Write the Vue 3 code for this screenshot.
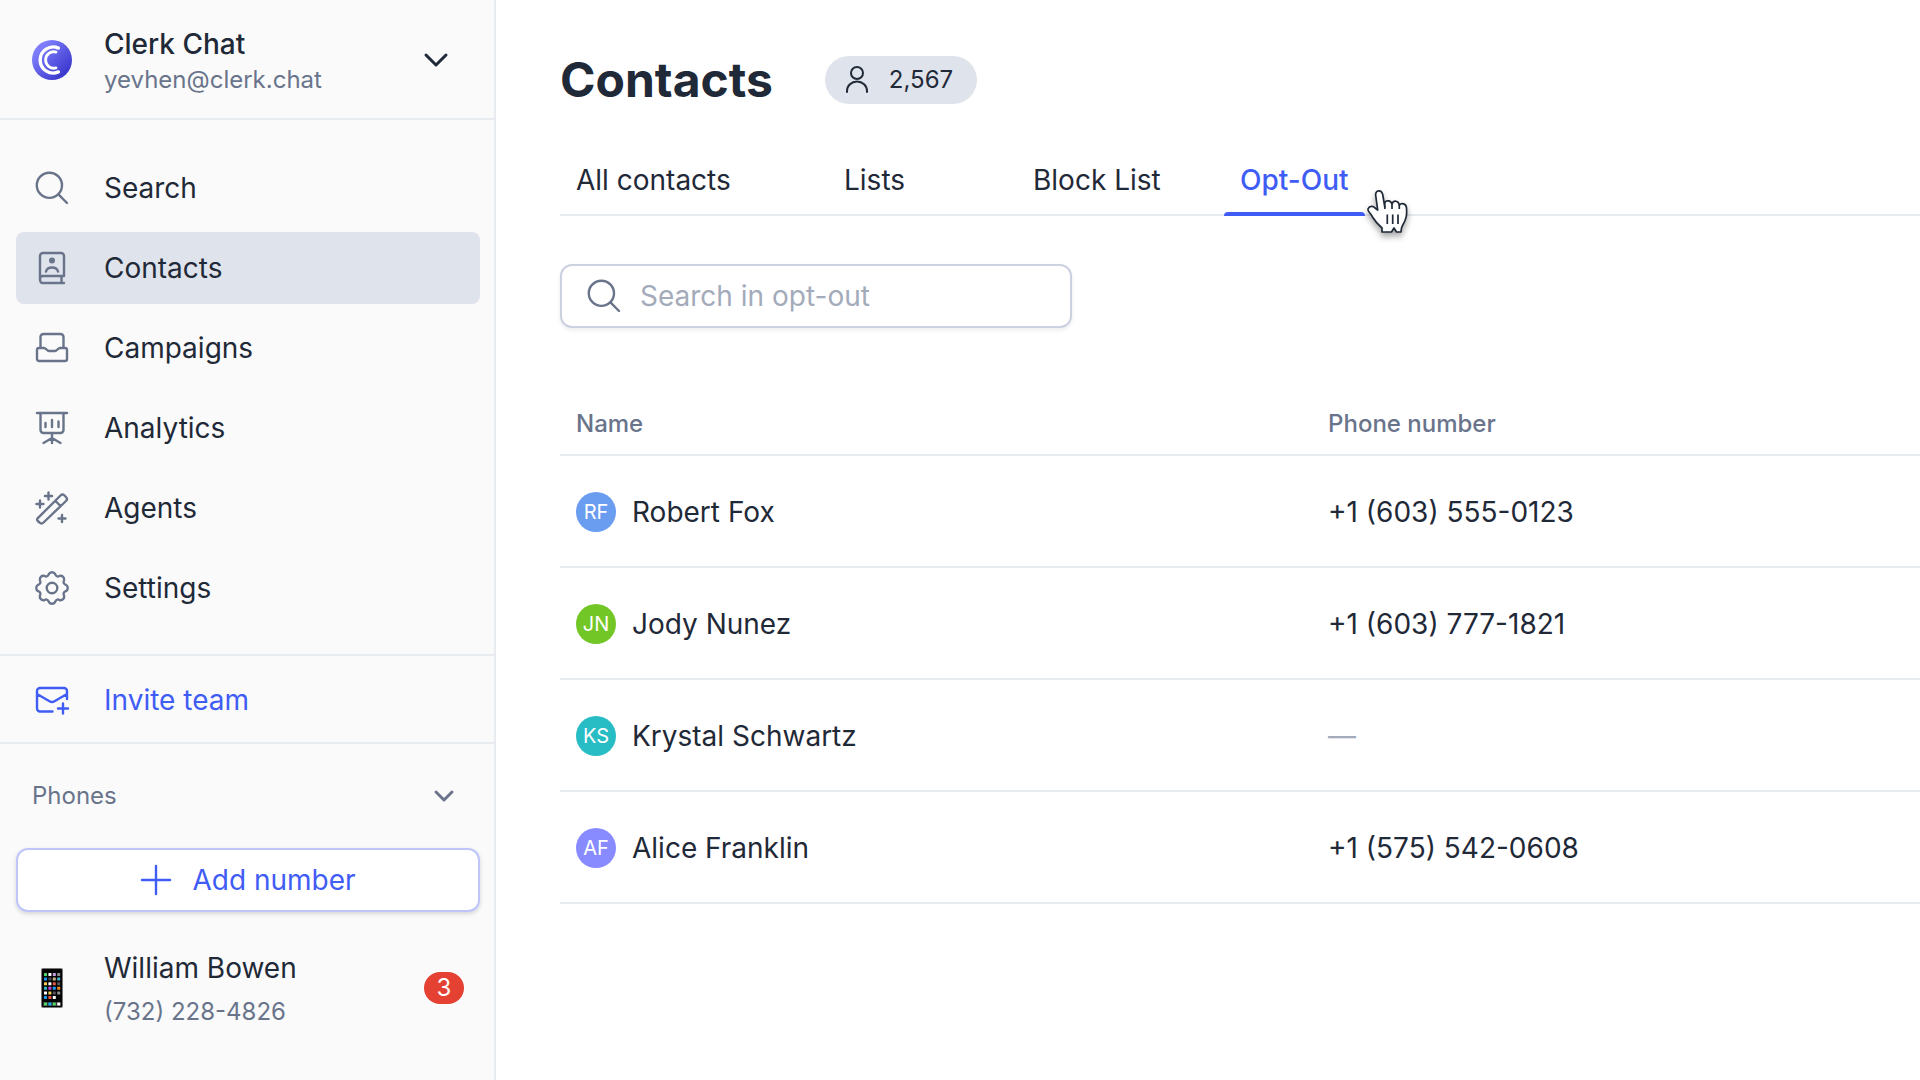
<template>
  <div class="layout">
    <aside class="sidebar">
      <button class="account" type="button" aria-label="Switch account">
        <svg class="logo" viewBox="0 0 40 40">
          <defs>
            <linearGradient id="logoFill" x1="0.1" y1="0.1" x2="0.85" y2="0.85">
              <stop offset="0.15" stop-color="#7d7dfb" />
              <stop offset="1" stop-color="#3a37cc" />
            </linearGradient>
          </defs>
          <circle cx="20" cy="20" r="20" fill="url(#logoFill)" />
          <g fill="none" stroke="#fff" stroke-linecap="round">
            <path d="M26.4 8.1A13 13 0 1 0 26.4 31.9" stroke-width="3.4" />
            <path d="M24 12.1A8.2 8.2 0 1 0 24 27.9" stroke-width="2.8" />
          </g>
        </svg>
        <span class="stack">
          <span class="account-name">Clerk Chat</span>
          <span class="sub">yevhen@clerk.chat</span>
        </span>
        <svg class="chevron" viewBox="0 0 32 32">
          <path d="M6 11l10 10 10-10" stroke-width="3" />
        </svg>
      </button>

      <nav class="nav">
        <a
          v-for="item in navItems"
          :key="item.label"
          href="#"
          class="nav-item"
          :class="{ active: item.label === activeNav }"
          @click.prevent="activeNav = item.label"
        >
          <svg class="icon" viewBox="0 0 32 32">
            <path :d="item.path" />
            <circle v-if="item.dot" :cx="item.dot.x" :cy="item.dot.y" :r="item.dot.r" class="dot" />
          </svg>
          <span>{{ item.label }}</span>
        </a>
      </nav>

      <div class="invite">
        <a href="#" class="nav-item link" @click.prevent>
          <svg class="icon" viewBox="0 0 32 32">
            <path d="M31 15V7a3 3 0 0 0-3-3H4a3 3 0 0 0-3 3v17.500a3 3 0 0 0 3 3h12.500M1 10l12.500 7.300q2.500 1.500 5 0L31 10M27 19.500v10M22 24.500h10" />
          </svg>
          <span>Invite team</span>
        </a>
      </div>

      <section class="phones">
        <button class="phones-head" type="button" @click="phonesOpen = !phonesOpen">
          <span>Phones</span>
          <svg class="chevron" viewBox="0 0 32 32">
            <path d="M8 12l8 8 8-8" stroke-width="3" />
          </svg>
        </button>
        <template v-if="phonesOpen">
          <button class="add" type="button">
            <svg class="icon" viewBox="0 0 32 32">
              <path d="M16 2v28M2 16h28" />
            </svg>
            <span>Add number</span>
          </button>
          <a href="#" class="phone-row" @click.prevent>
            <svg class="device" viewBox="0 0 40 40">
              <rect x="9" y="0" width="22" height="40" rx="2" fill="#77777a" />
              <rect x="10" y="1" width="20" height="38" rx="1" fill="#050505" />
              <rect x="11" y="34" width="18" height="4" fill="#333" />
              <rect
                v-for="(app, i) in apps"
                :key="i"
                :x="app.x"
                :y="app.y"
                width="3"
                height="3"
                rx="0.5"
                :fill="app.color"
              />
            </svg>
            <span class="stack spaced">
              <span>William Bowen</span>
              <span class="sub">(732) 228-4826</span>
            </span>
            <span class="badge">3</span>
          </a>
        </template>
      </section>
    </aside>

    <main class="main">
      <header class="title">
        <h1>Contacts</h1>
        <span class="pill">
          <svg viewBox="0 0 32 32">
            <circle cx="16" cy="9" r="6" />
            <path d="M6 28v-1a10 9.500 0 0 1 20 0v1" />
          </svg>
          2,567
        </span>
      </header>

      <div class="tabs" role="tablist">
        <button
          v-for="tab in tabs"
          :key="tab"
          type="button"
          role="tab"
          class="tab"
          :class="{ selected: tab === activeTab }"
          :aria-selected="tab === activeTab"
          @click="activeTab = tab"
        >
          {{ tab }}
          <svg v-if="tab === activeTab" class="pointer" viewBox="0 0 42 46">
            <path
              d="M10.700 20L8.700 5.500C8 -0.500 14.500 -0.500 15.700 4.500L17.800 17V13C18.500 9.800 24 10 25 14C26.500 9.800 31.500 10.500 32.300 15C34.500 12.500 39.400 13.500 39.500 18C40 25 39.500 29 35.500 35.500L34.500 38L34 42H29.500L27 38L24.500 42H15V38C10.500 34 7 29.500 5.500 27C3.500 23 0.500 21.500 1 19C2.500 15.500 6.500 16 8 18Z"
              fill="#fff"
            />
            <path d="M25 14V19M32.300 15V19M17.800 16V19M20.300 24.500V34M25.700 24.500V34M31 24.500V34" fill="none" />
          </svg>
        </button>
      </div>

      <label class="search">
        <svg class="icon" viewBox="0 0 32 32">
          <path :d="searchPath" />
        </svg>
        <input v-model="query" type="text" placeholder="Search in opt-out" aria-label="Search in opt-out" />
      </label>

      <table class="contacts">
        <thead>
          <tr>
            <th scope="col" class="col-name">Name</th>
            <th scope="col">Phone number</th>
          </tr>
        </thead>
        <tbody>
          <tr v-for="c in filtered" :key="c.name">
            <td>
              <div class="person">
                <span class="avatar" :class="c.tone">{{ c.initials }}</span>
                <span>{{ c.name }}</span>
              </div>
            </td>
            <td>
              <span v-if="c.phone">{{ c.phone }}</span>
              <span v-else class="empty">—</span>
            </td>
          </tr>
        </tbody>
      </table>
    </main>
  </div>
</template>

<script setup>
import { computed, ref } from 'vue';

const activeNav = ref('Contacts');
const activeTab = ref('Opt-Out');
const phonesOpen = ref(true);
const query = ref('');

const searchPath = 'M26 13.300a12.600 12.600 0 1 1-25.200 0a12.600 12.600 0 1 1 25.200 0M22.200 22.200l8.800 8.800';

// cog outline: eight round teeth joined by small notches
const gearPath = () => {
  const at = (deg, r) => {
    const a = (deg * Math.PI) / 180;
    return (16 + r * Math.cos(a)).toFixed(2) + ' ' + (16 + r * Math.sin(a)).toFixed(2);
  };
  let d = 'M' + at(-13, 14.2);
  for (let i = 0; i < 8; i++) {
    const mid = i * 45;
    d += 'A3.6 3.6 0 0 1 ' + at(mid + 13, 14.2);
    d += 'Q' + at(mid + 22.5, 11.4) + ' ' + at(mid + 32, 14.2);
  }
  return d + 'Z M21.300 16a5.300 5.300 0 1 1-10.600 0a5.300 5.300 0 1 1 10.600 0';
};

const navItems = [
  { label: 'Search', path: searchPath },
  {
    label: 'Contacts',
    path: 'M4 28V4a3 3 0 0 1 3-3h18a3 3 0 0 1 3 3v20H6.500a2.500 3.500 0 0 0 0 7H28M25.500 24v7M10 19.500q1-4 6-4t6 4',
    dot: { x: 16, y: 8.5, r: 3 },
  },
  {
    label: 'Campaigns',
    path: 'M4.500 16V5a3 3 0 0 1 3-3h17a3 3 0 0 1 3 3v11M3 16h5c2 0 3 3 5 3h6c2 0 3-3 5-3h5a2 2 0 0 1 2 2v9a2 2 0 0 1-2 2H3a2 2 0 0 1-2-2v-9a2 2 0 0 1 2-2Z',
  },
  {
    label: 'Analytics',
    path: 'M1 1h30M4.500 1v17a3 3 0 0 0 3 3h17a3 3 0 0 0 3-3V1M9.500 11v4M16 8v7M22.500 9.500v5.500M16 21v10M16 26l-8.500 5M16 26l8.500 5',
  },
  {
    label: 'Agents',
    path: 'M1.800 26.200L24.500 3.500q2-2 4 0l1.500 1.500q2 2 0 4L7.500 30.500q-2 2-4 0l-1.700-1.500q-1.500-1.500 0-2.800ZM19.500 9l5 5M12.500 0.500v7M9 4h7M4 8.500v7M0.500 12h7M26 23v7M22.500 26.500h7',
  },
  { label: 'Settings', path: gearPath() },
];

const appColors = [
  '#4cd964', '#ffffff', '#c79be8', '#8e8e93',
  '#1c9cf6', '#4a4a4c', '#c9b68c', '#45b8d8',
  '#f5d04c', '#ffffff', '#ea5545', '#5a5a5e',
  '#35b8cc', '#c244d8', '#1c9cf6', '#f08a18',
  '#ffffff', '#f7d154', '#55555a', '#8e8e93',
  '#1c9cf6', '#ea5545', '#ffffff', '#050505',
  '#4cd964', '#12b3f5', '#4cd964', '#ffffff',
];

const apps = appColors.map((color, i) => {
  const row = Math.floor(i / 4);
  return { color, x: 12 + (i % 4) * 4.4, y: row === 6 ? 34.5 : 5 + row * 4.6 };
});

const tabs = ['All contacts', 'Lists', 'Block List', 'Opt-Out'];

const contacts = [
  { name: 'Robert Fox', initials: 'RF', tone: 'blue', phone: '+1 (603) 555-0123' },
  { name: 'Jody Nunez', initials: 'JN', tone: 'green', phone: '+1 (603) 777-1821' },
  { name: 'Krystal Schwartz', initials: 'KS', tone: 'teal', phone: '' },
  { name: 'Alice Franklin', initials: 'AF', tone: 'violet', phone: '+1 (575) 542-0608' },
];

const filtered = computed(() =>
  contacts.filter((c) => c.name.toLowerCase().includes(query.value.toLowerCase()))
);
</script>

<style>
body {
  margin: 0;
  background: #fff;
}
</style>

<style scoped>
.layout {
  display: flex;
  min-height: 100vh;
  font-family: Inter, "Liberation Sans", sans-serif;
  font-size: 28px;
  line-height: 40px;
  color: #1f2937;
}

* {
  box-sizing: border-box;
}

button {
  padding: 0;
  border: 0;
  background: none;
  font: inherit;
  color: inherit;
  text-align: left;
  cursor: pointer;
}

a {
  color: inherit;
  text-decoration: none;
}

svg {
  flex: none;
  overflow: visible;
}

.sidebar {
  flex: none;
  display: flex;
  flex-direction: column;
  width: 496px;
  border-right: 2px solid #e8ecf1;
  background: #fafafa;
}

.account {
  display: flex;
  align-items: center;
  gap: 32px;
  padding: 24px 42px 22px 32px;
  border-bottom: 2px solid #e8ecf1;
}

.logo,
.device {
  width: 40px;
  height: 40px;
}

.stack {
  flex: 1;
  display: flex;
  flex-direction: column;
}

.stack.spaced {
  gap: 8px;
}

.account-name {
  font-weight: 500;
}

.sub {
  font-size: 24px;
  line-height: 32px;
  color: #69748b;
}

.chevron {
  width: 32px;
  height: 32px;
  fill: none;
  stroke: currentColor;
  stroke-linecap: round;
  stroke-linejoin: round;
}

.nav {
  display: flex;
  flex-direction: column;
  gap: 8px;
  padding: 32px 14px 30px 16px;
}

.nav-item {
  display: flex;
  align-items: center;
  gap: 36px;
  height: 72px;
  padding: 0 20px;
  border-radius: 8px;
}

.nav-item.active {
  background: #dfe3eb;
}

.icon {
  width: 32px;
  height: 32px;
  fill: none;
  stroke: #69748b;
  stroke-width: 2.4;
  stroke-linecap: round;
  stroke-linejoin: round;
}

.icon .dot {
  fill: #69748b;
  stroke: none;
}

.invite {
  padding: 8px 14px 6px 16px;
  border-top: 2px solid #e8ecf1;
  border-bottom: 2px solid #e8ecf1;
}

.link,
.add {
  color: #3f5cf5;
}

.link .icon,
.add .icon {
  stroke: #3f5cf5;
}

.phones {
  display: flex;
  flex-direction: column;
  padding: 0 14px 32px 16px;
}

.phones-head {
  display: flex;
  align-items: center;
  justify-content: space-between;
  height: 104px;
  padding: 0 20px 0 16px;
  font-size: 24px;
  color: #69748b;
}

.add {
  display: flex;
  align-items: center;
  justify-content: center;
  gap: 20px;
  height: 64px;
  border: 2px solid #bec6fd;
  border-radius: 12px;
  background: #fff;
  box-shadow: 0 2px 4px rgba(16, 24, 40, 0.16);
}

.phone-row {
  display: flex;
  align-items: center;
  gap: 32px;
  padding: 36px 16px 0;
}

.badge {
  min-width: 40px;
  border-radius: 16px;
  background: #e44132;
  font-size: 24px;
  line-height: 32px;
  text-align: center;
  color: #fff;
}

.main {
  flex: 1;
  min-width: 0;
  padding: 52px 0 64px 64px;
}

.title {
  display: flex;
  align-items: center;
  gap: 52px;
}

h1 {
  margin: 0;
  font-size: 48px;
  line-height: 56px;
  font-weight: 700;
}

.pill {
  display: flex;
  align-items: center;
  gap: 16px;
  height: 48px;
  padding: 0 24px 0 16px;
  border-radius: 24px;
  background: #dfe3eb;
  font-size: 24px;
}

.pill svg {
  width: 32px;
  height: 32px;
  fill: none;
  stroke: #1f2937;
  stroke-width: 2;
  stroke-linecap: round;
}

.tabs {
  display: grid;
  grid-template-columns: 268px 189px 207px auto;
  justify-content: start;
  justify-items: start;
  margin-top: 36px;
  box-shadow: inset 0 -2px #e8ecf1;
}

.tab {
  position: relative;
  height: 72px;
  padding: 0 16px;
  white-space: nowrap;
}

.tab.selected {
  font-weight: 500;
  color: #3f5cf5;
}

.tab.selected::after {
  content: "";
  position: absolute;
  left: 0;
  right: 0;
  bottom: 0;
  height: 4px;
  border-radius: 4px 4px 0 0;
  background: #3f5cf5;
}

/* hand cursor hovering over the corner of the selected tab */
.pointer {
  position: absolute;
  z-index: 1;
  right: -44px;
  bottom: -20px;
  width: 42px;
  height: 46px;
  stroke: #1f2937;
  stroke-width: 1.7;
  stroke-linejoin: round;
  filter: drop-shadow(0 4px 3px rgba(0, 0, 0, 0.35));
}

.search {
  display: flex;
  align-items: center;
  gap: 20px;
  width: 512px;
  max-width: 100%;
  height: 64px;
  margin-top: 48px;
  padding: 0 26px;
  border: 2px solid #cbd1e0;
  border-radius: 12px;
  background: #fff;
  box-shadow: 0 2px 4px rgba(16, 24, 40, 0.08);
}

.search input {
  flex: 1;
  min-width: 0;
  padding: 0;
  border: 0;
  outline: 0;
  background: none;
  font: inherit;
  color: inherit;
}

.search input::placeholder,
.empty {
  color: #a3abbb;
  opacity: 1;
}

.contacts {
  width: 100%;
  margin-top: 60px;
  border-spacing: 0;
  table-layout: fixed;
}

th,
td {
  padding: 2px 16px 0;
  border-bottom: 2px solid #e8ecf1;
  text-align: left;
}

th {
  height: 68px;
  padding-top: 6px;
  font-size: 24px;
  font-weight: 500;
  color: #69748b;
}

td {
  height: 112px;
}

.col-name {
  width: 55.3%;
}

.person {
  display: flex;
  align-items: center;
  gap: 16px;
}

.avatar {
  width: 40px;
  border-radius: 50%;
  font-size: 20px;
  text-align: center;
  color: #fff;
}

.blue {
  background: #6a9cf0;
}

.green {
  background: #72c626;
}

.teal {
  background: #28bcc4;
}

.violet {
  background: #878bff;
}
</style>
